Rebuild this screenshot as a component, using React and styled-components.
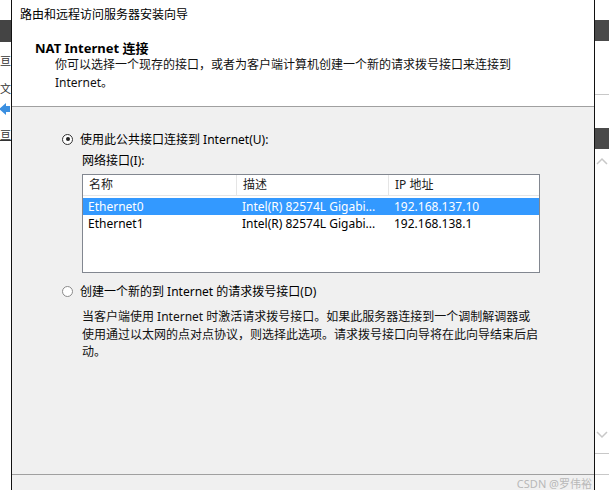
import styled, { createGlobalStyle } from "styled-components";

const GlobalStyle = createGlobalStyle`
  html, body {
    margin: 0;
    padding: 0;
    background: #ffffff;
  }
  body {
    font-family: "Noto Sans", "Noto Sans CJK SC", sans-serif;
    font-size: 12px;
    color: #000;
  }
`;

const interfaces = [
  { name: "Ethernet0", desc: "Intel(R) 82574L Gigabi...", ip: "192.168.137.10", selected: true },
  { name: "Ethernet1", desc: "Intel(R) 82574L Gigabi...", ip: "192.168.138.1" },
];

const App = () => {
  return (
    <>
      <GlobalStyle />
      <Screen>
        <LeftStrip>
          <DarkBar />
          <StripGlyph top={11}>亘</StripGlyph>
          <StripGlyph top={13}>文</StripGlyph>
          <StripArrow>
            <svg width="11" height="14" viewBox="0 0 11 14">
              <path d="M0 7 L7 1 L7 4 L11 4 L11 10 L7 10 L7 13 Z" fill="#3b8fe0" />
            </svg>
          </StripArrow>
          <StripGlyph top={11} underline>亘</StripGlyph>
        </LeftStrip>

        <Dialog>
          <Header>
            <Title>路由和远程访问服务器安装向导</Title>
            <Heading>NAT Internet 连接</Heading>
            <Subtitle>
              你可以选择一个现存的接口，或者为客户端计算机创建一个新的请求拨号接口来连接到
              <br />
              Internet。
            </Subtitle>
          </Header>

          <Body>
            <Option>
              <Radio checked />
              <span>使用此公共接口连接到 Internet(U):</span>
            </Option>
            <Indented>
              <Label>网络接口(I):</Label>
              <ListBox>
                <ListHead>
                  <HeadCell width={154}>名称</HeadCell>
                  <HeadCell width={152}>描述</HeadCell>
                  <HeadCell width={150} last>IP 地址</HeadCell>
                </ListHead>
                {interfaces.map((row) => (
                  <ListRow key={row.name} selected={row.selected}>
                    <Cell width={154}>{row.name}</Cell>
                    <Cell width={152}>{row.desc}</Cell>
                    <Cell width={150}>{row.ip}</Cell>
                  </ListRow>
                ))}
              </ListBox>
            </Indented>

            <Option second>
              <Radio />
              <span>创建一个新的到 Internet 的请求拨号接口(D)</span>
            </Option>
            <Paragraph>
              当客户端使用 Internet 时激活请求拨号接口。如果此服务器连接到一个调制解调器或
              <br />
              使用通过以太网的点对点协议，则选择此选项。请求拨号接口向导将在此向导结束后启
              <br />
              动。
            </Paragraph>
          </Body>

          <Footer>
            <Watermark>CSDN @罗伟裕</Watermark>
          </Footer>
        </Dialog>

        <RightStrip>
          <RightDark top={20} />
          <RightLine top={53} />
          <RightDark top={33} />
          <Chevron top={8}>
            <svg width="12" height="8" viewBox="0 0 12 8">
              <path d="M1 7 L6 2 L11 7" fill="none" stroke="#c8c8c8" strokeWidth="1.5" />
            </svg>
          </Chevron>
          <Grow />
          <Chevron>
            <svg width="12" height="8" viewBox="0 0 12 8">
              <path d="M1 1 L6 6 L11 1" fill="none" stroke="#c8c8c8" strokeWidth="1.5" />
            </svg>
          </Chevron>
          <RightLine top={14} />
          <RightLine top={20} />
          <Spacer />
        </RightStrip>
      </Screen>
    </>
  );
};

export default App;

const Screen = styled.div`
  width: 609px;
  height: 490px;
  display: flex;
  overflow: hidden;
`;

const LeftStrip = styled.div`
  width: 11px;
  display: flex;
  flex-direction: column;
  overflow: hidden;
  background: #fff;
`;

const DarkBar = styled.div`
  height: 22px;
  margin-top: 20px;
  background: #444;
  flex-shrink: 0;
`;

const StripGlyph = styled.div`
  margin-top: ${({ top }) => top}px;
  font-size: 11px;
  line-height: 15px;
  color: #333;
  white-space: nowrap;
  text-decoration: ${({ underline }) => (underline ? "underline" : "none")};
`;

const StripArrow = styled.div`
  margin-top: 6px;
  height: 14px;
  svg {
    display: block;
    margin-left: -1px;
  }
`;

const Dialog = styled.div`
  width: 582px;
  border-left: 1px solid #111;
  border-right: 1px solid #111;
  display: flex;
  flex-direction: column;
  background: #f0f0f0;
`;

const Header = styled.div`
  height: 107px;
  box-sizing: border-box;
  background: #fff;
  border-bottom: 1px solid #a0a0a0;
  padding-top: 7px;
  flex-shrink: 0;
`;

const Title = styled.div`
  padding-left: 8px;
  line-height: 16px;
  font-size: 12px;
  color: #000;
`;

const Heading = styled.div`
  margin-top: 17px;
  padding-left: 23px;
  font-size: 13px;
  font-weight: bold;
  line-height: 16px;
  color: #000;
`;

const Subtitle = styled.div`
  padding-left: 43px;
  line-height: 18px;
  color: #111;
`;

const Body = styled.div`
  flex: 1;
  padding-top: 23px;
  padding-left: 50px;
`;

const Option = styled.div`
  display: flex;
  align-items: center;
  gap: 7px;
  height: 18px;
  margin-top: ${({ second }) => (second ? "9px" : "0")};
`;

const Radio = styled.span`
  width: 9px;
  height: 9px;
  border-radius: 50%;
  border: 1px solid ${({ checked }) => (checked ? "#333" : "#8a8a8a")};
  background: #fff;
  position: relative;
  flex-shrink: 0;

  &::after {
    content: "";
    display: ${({ checked }) => (checked ? "block" : "none")};
    position: absolute;
    left: 2.5px;
    top: 2.5px;
    width: 4px;
    height: 4px;
    border-radius: 50%;
    background: #222;
  }
`;

const Indented = styled.div`
  padding-left: 20px;
`;

const Label = styled.div`
  margin-top: 4px;
  line-height: 18px;
`;

const ListBox = styled.div`
  margin-top: 4px;
  width: 456px;
  height: 97px;
  border: 1px solid #828790;
  background: #fff;
`;

const ListHead = styled.div`
  display: flex;
  height: 20px;
  border-bottom: 1px solid #e5e5e5;
`;

const HeadCell = styled.div`
  width: ${({ width }) => width}px;
  flex-shrink: 0;
  box-sizing: border-box;
  padding-left: 6px;
  line-height: 20px;
  border-right: ${({ last }) => (last ? "none" : "1px solid #e5e5e5")};
  color: #222;
`;

const ListRow = styled.div`
  display: flex;
  height: 17px;
  margin-top: ${({ selected }) => (selected ? "2px" : "0")};
  background: ${({ selected }) => (selected ? "#3399ff" : "transparent")};
  color: ${({ selected }) => (selected ? "#fff" : "#000")};
`;

const Cell = styled.div`
  width: ${({ width }) => width}px;
  flex-shrink: 0;
  box-sizing: border-box;
  padding-left: 5px;
  line-height: 17px;
  white-space: nowrap;
`;

const Paragraph = styled.div`
  margin-top: 8px;
  padding-left: 20px;
  line-height: 17.5px;
  color: #111;
`;

const Footer = styled.div`
  height: 15px;
  border-top: 1px solid #a0a0a0;
  display: flex;
  justify-content: flex-end;
  align-items: center;
`;

const Watermark = styled.span`
  font-size: 11px;
  color: #b8b8b8;
  padding-right: 2px;
`;

const RightStrip = styled.div`
  width: 14px;
  display: flex;
  flex-direction: column;
  background: #fff;
  overflow: hidden;
`;

const RightDark = styled.div`
  margin-top: ${({ top }) => top}px;
  height: 21px;
  background: #4a4a4a;
  flex-shrink: 0;
`;

const RightLine = styled.div`
  margin-top: ${({ top }) => top}px;
  height: 1px;
  background: #c8c8c8;
  flex-shrink: 0;
`;

const Chevron = styled.div`
  margin-top: ${({ top }) => top || 0}px;
  svg {
    display: block;
    margin-left: 1px;
  }
`;

const Grow = styled.div`
  flex: 1;
`;

const Spacer = styled.div`
  height: 15px;
`;
